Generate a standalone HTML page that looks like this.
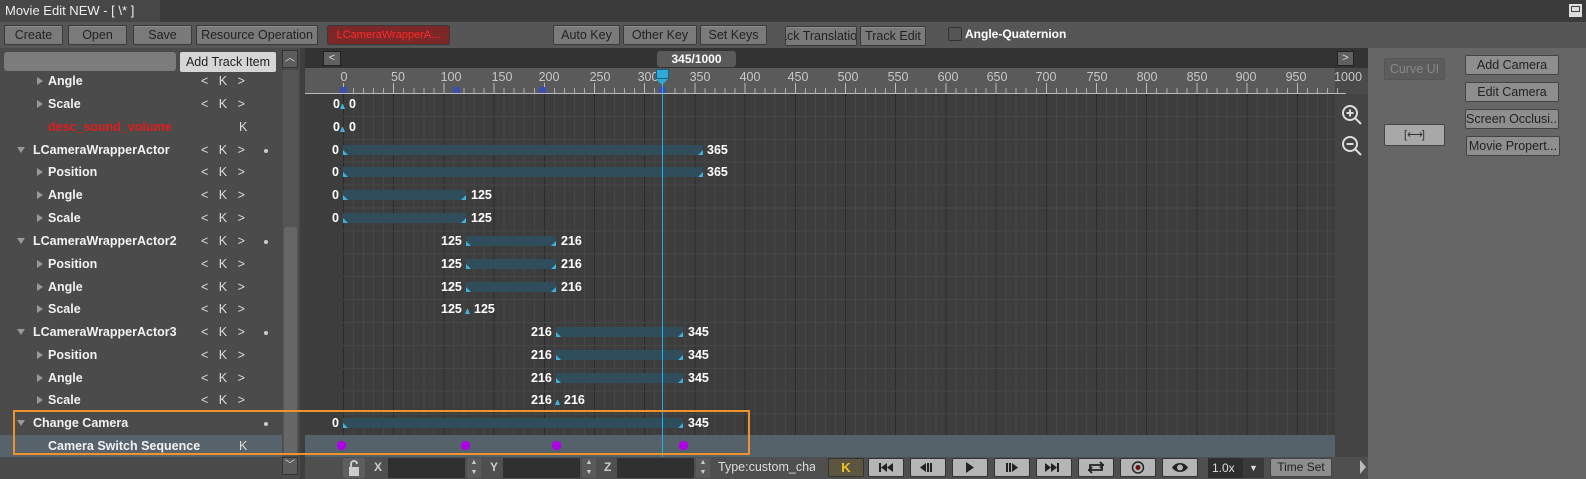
<!DOCTYPE html>
<html><head><meta charset="utf-8"><style>
*{margin:0;padding:0;box-sizing:border-box}
body{width:1586px;height:479px;overflow:hidden;background:#4a4a4a;font-family:"Liberation Sans",sans-serif;font-size:12px;color:#fff;position:relative}
.a{position:absolute}
.btn{position:absolute;background:#7a7a7a;border:1px solid #3a3a3a;border-radius:2px;color:#222;text-align:center;font-size:12.5px;line-height:18px;box-shadow:inset 0 1px 0 #8c8c8c}
.lb{position:absolute;font-size:12.5px;font-weight:bold;color:#f2f2f2;line-height:14px}
.k{position:absolute;color:#ddd;font-size:12.5px;line-height:14px}
.tri-d{position:absolute;width:0;height:0;border-left:4px solid transparent;border-right:4px solid transparent;border-top:6px solid #999}
.tri-r{position:absolute;width:0;height:0;border-top:4px solid transparent;border-bottom:4px solid transparent;border-left:6px solid #999}
.dot{position:absolute;width:4px;height:4px;border-radius:2px;background:#ccc}
.bar{position:absolute;height:10px;background:#2f4d5a}
.bar:before{content:"";position:absolute;left:0;bottom:0;border-bottom:5px solid #3fb2dc;border-right:5px solid transparent}
.bar:after{content:"";position:absolute;right:0;bottom:0;border-bottom:5px solid #3fb2dc;border-left:5px solid transparent}
.num{position:absolute;font-weight:bold;color:#fff;font-size:12.5px;line-height:14px}
.mk{position:absolute;width:5px;height:5px;border-bottom:5px solid #3fb2dc;border-left:2px solid transparent;border-right:2px solid transparent}
.pm{position:absolute;width:9px;height:9px;border-radius:4px;background:#b000e8}
.rl{position:absolute;top:70px;color:#c8c8c8;font-size:12.5px;transform:translateX(-50%)}
.pb{position:absolute;top:458px;height:19px;width:36px;background:#b5b5b5;border:1px solid #333;border-radius:2px}
.rb{position:absolute;background:#8e8e8e;border:1px solid #444;border-radius:2px;color:#222;text-align:center;font-size:12.5px;line-height:18px}
</style></head><body>
<div class="a" style="left:0;top:0;width:1586px;height:22px;background:#3b3b3b"></div>
<div class="a" style="left:0;top:0;width:160px;height:22px;background:#474747"></div>
<div class="a" style="left:5px;top:3px;font-size:13px;color:#eee">Movie Edit NEW - [ \* ]</div>
<div class="a" style="left:1569px;top:4px;width:13px;height:13px;background:#ddd"></div>
<div class="a" style="left:1571px;top:6px;width:9px;height:6px;border:1px solid #444"></div>
<div class="a" style="left:0;top:22px;width:1586px;height:26px;background:#565656"></div>
<div class="btn" style="left:4px;top:25px;width:59px">Create</div>
<div class="btn" style="left:68px;top:25px;width:59px">Open</div>
<div class="btn" style="left:133px;top:25px;width:59px">Save</div>
<div class="btn" style="left:196px;top:25px;width:122px">Resource Operation</div>
<div class="btn" style="left:327px;top:25px;width:123px;background:#7c2828;color:#ff2a2a;box-shadow:none;font-size:11px">LCameraWrapperA...</div>
<div class="btn" style="left:553px;top:25px;width:67px">Auto Key</div>
<div class="btn" style="left:623px;top:25px;width:74px">Other Key</div>
<div class="btn" style="left:700px;top:25px;width:67px">Set Keys</div>
<div class="btn" style="left:785px;top:26px;width:72px;overflow:hidden;white-space:nowrap;text-indent:-6px">ack Translatio</div>
<div class="btn" style="left:860px;top:26px;width:66px">Track Edit</div>
<div class="a" style="left:948px;top:27px;width:14px;height:14px;border:1px solid #333;background:#555;border-radius:2px"></div>
<div class="a" style="left:965px;top:27px;font-weight:bold;color:#fff">Angle-Quaternion</div>
<div class="a" style="left:0;top:48px;width:300px;height:431px;background:#4b4b4b"></div>
<div class="a" style="left:4px;top:52px;width:172px;height:19px;background:#7c7c7c;border-radius:3px"></div>
<div class="a" style="left:180px;top:52px;width:96px;height:20px;background:#d6d6d6;color:#222;text-align:center;line-height:20px;border-radius:2px;font-size:12.5px">Add Track Item</div>
<div class="a" style="left:282px;top:50px;width:16px;height:18px;background:#5c5c5c;border:1px solid #333;color:#ddd;text-align:center;font-size:10px;line-height:16px">︿</div>
<div class="a" style="left:283px;top:70px;width:15px;height:386px;background:#555"></div>
<div class="a" style="left:284px;top:227px;width:13px;height:228px;background:#666;border-radius:3px"></div>
<div class="a" style="left:282px;top:457px;width:16px;height:18px;background:#5c5c5c;border:1px solid #333;color:#ddd;text-align:center;font-size:10px;line-height:16px">﹀</div>
<div class="a" style="left:300px;top:48px;width:5px;height:431px;background:#3e3e3e"></div>
<div class="a" style="left:0;top:435px;width:282px;height:22px;background:#58636b"></div>
<div class="tri-r" style="left:37px;top:77px"></div><div class="lb" style="left:48px;top:74px">Angle</div>
<div class="tri-r" style="left:37px;top:100px"></div><div class="lb" style="left:48px;top:97px">Scale</div>
<div class="lb" style="left:48px;top:120px;color:#e01c1c">desc_sound_volume</div>
<div class="tri-d" style="left:17px;top:147px"></div><div class="lb" style="left:33px;top:143px">LCameraWrapperActor</div>
<div class="tri-r" style="left:37px;top:168px"></div><div class="lb" style="left:48px;top:165px">Position</div>
<div class="tri-r" style="left:37px;top:191px"></div><div class="lb" style="left:48px;top:188px">Angle</div>
<div class="tri-r" style="left:37px;top:214px"></div><div class="lb" style="left:48px;top:211px">Scale</div>
<div class="tri-d" style="left:17px;top:238px"></div><div class="lb" style="left:33px;top:234px">LCameraWrapperActor2</div>
<div class="tri-r" style="left:37px;top:260px"></div><div class="lb" style="left:48px;top:257px">Position</div>
<div class="tri-r" style="left:37px;top:283px"></div><div class="lb" style="left:48px;top:280px">Angle</div>
<div class="tri-r" style="left:37px;top:305px"></div><div class="lb" style="left:48px;top:302px">Scale</div>
<div class="tri-d" style="left:17px;top:329px"></div><div class="lb" style="left:33px;top:325px">LCameraWrapperActor3</div>
<div class="tri-r" style="left:37px;top:351px"></div><div class="lb" style="left:48px;top:348px">Position</div>
<div class="tri-r" style="left:37px;top:374px"></div><div class="lb" style="left:48px;top:371px">Angle</div>
<div class="tri-r" style="left:37px;top:396px"></div><div class="lb" style="left:48px;top:393px">Scale</div>
<div class="tri-d" style="left:17px;top:420px"></div><div class="lb" style="left:33px;top:416px">Change Camera</div>
<div class="lb" style="left:48px;top:439px">Camera Switch Sequence</div>
<div class="k" style="left:201px;top:74px;word-spacing:7px">&lt; K &gt;</div>
<div class="k" style="left:201px;top:97px;word-spacing:7px">&lt; K &gt;</div>
<div class="k" style="left:239px;top:120px">K</div>
<div class="k" style="left:201px;top:143px;word-spacing:7px">&lt; K &gt;</div><div class="dot" style="left:264px;top:149px"></div>
<div class="k" style="left:201px;top:165px;word-spacing:7px">&lt; K &gt;</div>
<div class="k" style="left:201px;top:188px;word-spacing:7px">&lt; K &gt;</div>
<div class="k" style="left:201px;top:211px;word-spacing:7px">&lt; K &gt;</div>
<div class="k" style="left:201px;top:234px;word-spacing:7px">&lt; K &gt;</div><div class="dot" style="left:264px;top:240px"></div>
<div class="k" style="left:201px;top:257px;word-spacing:7px">&lt; K &gt;</div>
<div class="k" style="left:201px;top:280px;word-spacing:7px">&lt; K &gt;</div>
<div class="k" style="left:201px;top:302px;word-spacing:7px">&lt; K &gt;</div>
<div class="k" style="left:201px;top:325px;word-spacing:7px">&lt; K &gt;</div><div class="dot" style="left:264px;top:331px"></div>
<div class="k" style="left:201px;top:348px;word-spacing:7px">&lt; K &gt;</div>
<div class="k" style="left:201px;top:371px;word-spacing:7px">&lt; K &gt;</div>
<div class="k" style="left:201px;top:393px;word-spacing:7px">&lt; K &gt;</div>
<div class="dot" style="left:264px;top:422px"></div>
<div class="k" style="left:239px;top:439px">K</div>
<div class="a" style="left:305px;top:48px;width:1063px;height:20px;background:#333"></div>
<div class="a" style="left:323px;top:51px;width:18px;height:15px;background:#606060;border:1px solid #222;color:#ddd;text-align:center;line-height:13px;font-size:11px">&lt;</div>
<div class="a" style="left:1337px;top:51px;width:17px;height:15px;background:#606060;border:1px solid #222;color:#ddd;text-align:center;line-height:13px;font-size:11px">&gt;</div>
<div class="a" style="left:657px;top:51px;width:79px;height:16px;background:#5a5a5a;border-radius:3px;color:#fff;text-align:center;line-height:16px;font-weight:bold">345/1000</div>
<div class="a" style="left:305px;top:68px;width:1030px;height:26px;background:#5a5a5a"></div>
<div class="a" style="left:343px;top:88px;width:1003px;height:5px;background:repeating-linear-gradient(90deg,#aaa 0 1px,transparent 1px 10.04px)"></div>
<div class="a" style="left:343px;top:83px;width:1003px;height:10px;background:repeating-linear-gradient(90deg,#bbb 0 1px,transparent 1px 50.2px)"></div>
<div class="a" style="left:305px;top:93px;width:1041px;height:1px;background:#bbb"></div>
<div class="rl" style="left:344px">0</div><div class="rl" style="left:398px">50</div><div class="rl" style="left:451px">100</div><div class="rl" style="left:502px">150</div><div class="rl" style="left:549px">200</div><div class="rl" style="left:600px">250</div><div class="rl" style="left:648px">300</div><div class="rl" style="left:700px">350</div><div class="rl" style="left:750px">400</div><div class="rl" style="left:798px">450</div><div class="rl" style="left:848px">500</div><div class="rl" style="left:898px">550</div><div class="rl" style="left:948px">600</div><div class="rl" style="left:997px">650</div><div class="rl" style="left:1046px">700</div><div class="rl" style="left:1097px">750</div><div class="rl" style="left:1147px">800</div><div class="rl" style="left:1197px">850</div><div class="rl" style="left:1246px">900</div><div class="rl" style="left:1296px">950</div><div class="rl" style="left:1348px">1000</div>
<div class="a" style="left:340px;top:87px;width:7px;height:6px;background:#3b4fb0"></div>
<div class="a" style="left:453px;top:87px;width:7px;height:6px;background:#3b4fb0"></div>
<div class="a" style="left:539px;top:87px;width:7px;height:6px;background:#3b4fb0"></div>
<div class="a" style="left:659px;top:87px;width:7px;height:6px;background:#3b4fb0"></div>
<div class="a" style="left:305px;top:94px;width:1030px;height:363px;background:#3d3d3d"></div>
<div class="a" style="left:343px;top:94px;width:1003px;height:363px;background:repeating-linear-gradient(90deg,#474747 0 1px,transparent 1px 10.04px)"></div>
<div class="a" style="left:343px;top:94px;width:1003px;height:363px;background:repeating-linear-gradient(90deg,#2a2a2a 0 1px,transparent 1px 50.2px)"></div>
<div class="a" style="left:305px;top:94px;width:1030px;height:363px;background:repeating-linear-gradient(180deg,transparent 0 21.9px,#474747 21.9px 22.9px)"></div>
<div class="a" style="left:305px;top:94px;width:38px;height:363px;background:#3d3d3d"></div>
<div class="a" style="left:305px;top:435px;width:1030px;height:22px;background:#56626a"></div>
<div class="a" style="left:1335px;top:94px;width:33px;height:363px;background:#444"></div>
<div class="num" style="left:333px;top:97px">0</div><div class="mk" style="left:340px;top:104px"></div><div class="num" style="left:349px;top:97px">0</div>
<div class="num" style="left:333px;top:120px">0</div><div class="mk" style="left:340px;top:127px"></div><div class="num" style="left:349px;top:120px">0</div>
<div class="num" style="left:332px;top:143px">0</div><div class="bar" style="left:343px;top:145px;width:360px"></div><div class="num" style="left:707px;top:143px">365</div>
<div class="num" style="left:332px;top:165px">0</div><div class="bar" style="left:343px;top:167px;width:360px"></div><div class="num" style="left:707px;top:165px">365</div>
<div class="num" style="left:332px;top:188px">0</div><div class="bar" style="left:343px;top:190px;width:123px"></div><div class="num" style="left:471px;top:188px">125</div>
<div class="num" style="left:332px;top:211px">0</div><div class="bar" style="left:343px;top:213px;width:123px"></div><div class="num" style="left:471px;top:211px">125</div>
<div class="num" style="left:441px;top:234px">125</div><div class="bar" style="left:466px;top:236px;width:90px"></div><div class="num" style="left:561px;top:234px">216</div>
<div class="num" style="left:441px;top:257px">125</div><div class="bar" style="left:466px;top:259px;width:90px"></div><div class="num" style="left:561px;top:257px">216</div>
<div class="num" style="left:441px;top:280px">125</div><div class="bar" style="left:466px;top:282px;width:90px"></div><div class="num" style="left:561px;top:280px">216</div>
<div class="num" style="left:441px;top:302px">125</div><div class="mk" style="left:465px;top:309px"></div><div class="num" style="left:474px;top:302px">125</div>
<div class="num" style="left:531px;top:325px">216</div><div class="bar" style="left:556px;top:327px;width:127px"></div><div class="num" style="left:688px;top:325px">345</div>
<div class="num" style="left:531px;top:348px">216</div><div class="bar" style="left:556px;top:350px;width:127px"></div><div class="num" style="left:688px;top:348px">345</div>
<div class="num" style="left:531px;top:371px">216</div><div class="bar" style="left:556px;top:373px;width:127px"></div><div class="num" style="left:688px;top:371px">345</div>
<div class="num" style="left:531px;top:393px">216</div><div class="mk" style="left:555px;top:400px"></div><div class="num" style="left:564px;top:393px">216</div>
<div class="num" style="left:332px;top:416px">0</div><div class="bar" style="left:343px;top:418px;width:340px"></div><div class="num" style="left:688px;top:416px">345</div>
<div class="pm" style="left:337px;top:441px"></div><div class="pm" style="left:461px;top:441px"></div><div class="pm" style="left:552px;top:441px"></div><div class="pm" style="left:679px;top:441px"></div>
<div class="a" style="left:662px;top:80px;width:1px;height:377px;background:#19b4ea"></div>
<div class="a" style="left:656px;top:69px;width:13px;height:10px;background:#2fa9d8;border:1px solid #15607c"></div>
<div class="a" style="left:656px;top:79px;border-left:6.5px solid transparent;border-right:6.5px solid transparent;border-top:6px solid #2fa9d8"></div>
<svg class="a" style="left:1340px;top:103px" width="24" height="56" viewBox="0 0 24 56"><g fill="none" stroke="#ddd" stroke-width="2"><circle cx="10" cy="10" r="7"/><path d="M15 15l6 6M6.5 10h7M10 6.5v7"/><circle cx="10" cy="41" r="7"/><path d="M15 46l6 6M6.5 41h7"/></g></svg>
<div class="a" style="left:13px;top:410px;width:737px;height:45px;border:2px solid #f0922e"></div>
<div class="a" style="left:1368px;top:48px;width:218px;height:431px;background:#666"></div>
<div class="rb" style="left:1384px;top:58px;width:61px;height:22px;background:#5c5c5c;color:#888;border-color:#555;line-height:20px">Curve UI</div>
<div class="rb" style="left:1384px;top:124px;width:61px;height:22px;background:#a8a8a8;line-height:20px;font-size:11px;color:#333">[<span style="letter-spacing:-1px">⟷</span>]</div>
<div class="rb" style="left:1465px;top:55px;width:94px;height:20px">Add Camera</div>
<div class="rb" style="left:1465px;top:82px;width:94px;height:20px">Edit Camera</div>
<div class="rb" style="left:1465px;top:109px;width:94px;height:20px;white-space:nowrap;overflow:hidden">Screen Occlusi...</div>
<div class="rb" style="left:1466px;top:136px;width:94px;height:20px;white-space:nowrap;overflow:hidden">Movie Propert...</div>
<div class="a" style="left:305px;top:457px;width:1063px;height:22px;background:#4f4f4f"></div>
<div class="a" style="left:343px;top:458px;width:22px;height:20px;background:#5e5e5e;border-radius:2px"></div>
<svg class="a" style="left:347px;top:459px" width="14" height="18"><path d="M4 8V5a3 3 0 0 1 6 0" fill="none" stroke="#ccc" stroke-width="2"/><rect x="2" y="8" width="10" height="9" fill="#ccc"/></svg>
<div class="a" style="left:374px;top:460px;color:#ccc;font-weight:bold">X</div>
<div class="a" style="left:388px;top:458px;width:77px;height:20px;background:#303030"></div>
<div class="a" style="left:467px;top:458px;width:14px;height:20px;background:#5a5a5a;color:#ccc;font-size:7px;text-align:center;line-height:10px">▲<br>▼</div>
<div class="a" style="left:490px;top:460px;color:#ccc;font-weight:bold">Y</div>
<div class="a" style="left:503px;top:458px;width:77px;height:20px;background:#303030"></div>
<div class="a" style="left:582px;top:458px;width:14px;height:20px;background:#5a5a5a;color:#ccc;font-size:7px;text-align:center;line-height:10px">▲<br>▼</div>
<div class="a" style="left:604px;top:460px;color:#ccc;font-weight:bold">Z</div>
<div class="a" style="left:617px;top:458px;width:77px;height:20px;background:#303030"></div>
<div class="a" style="left:696px;top:458px;width:14px;height:20px;background:#5a5a5a;color:#ccc;font-size:7px;text-align:center;line-height:10px">▲<br>▼</div>
<div class="a" style="left:718px;top:460px;color:#ddd;width:97px;overflow:hidden;white-space:nowrap;font-size:12.5px">Type:custom_cha</div>
<div class="a" style="left:828px;top:458px;width:36px;height:19px;background:#5c5540;border:1px solid #333;border-radius:2px;color:#f0c420;font-weight:bold;text-align:center;line-height:17px;font-size:13px">K</div>
<div class="pb" style="left:868px"></div><div class="pb" style="left:910px"></div><div class="pb" style="left:952px"></div><div class="pb" style="left:994px"></div><div class="pb" style="left:1036px"></div><div class="pb" style="left:1078px"></div><div class="pb" style="left:1120px"></div><div class="pb" style="left:1162px"></div>
<svg class="a" style="left:868px;top:458px" width="330" height="19"><g fill="#222">
<rect x="11" y="5" width="2" height="9"/><path d="M19 5v9l-6-4.5z M25 5v9l-6-4.5z"/>
<path d="M58 5v9l-6-4.5z"/><rect x="59" y="5" width="2" height="9"/><rect x="62" y="5" width="2" height="9"/>
<path d="M98 4v11l8-5.5z"/>
<rect x="138" y="5" width="2" height="9"/><rect x="141" y="5" width="2" height="9"/><path d="M144 5v9l6-4.5z"/>
<path d="M177 5v9l6-4.5z M183 5v9l6-4.5z"/><rect x="189" y="5" width="2" height="9"/>
<circle cx="270" cy="9.5" r="5.5" fill="none" stroke="#222" stroke-width="1.5"/><circle cx="270" cy="9.5" r="2.5" fill="#6b1010"/>
<path d="M304 9.5c4-6 12-6 16 0c-4 6-12 6-16 0z"/><circle cx="312" cy="9.5" r="3" fill="#b5b5b5"/>
</g><g fill="none" stroke="#222" stroke-width="1.8"><path d="M236 7h-14v5 M220 12h14v-5 M232 4l3 3-3 3 M224 9l-3 3 3 3"/></g></svg>
<div class="a" style="left:1208px;top:458px;width:56px;height:20px;background:#2e2e2e;color:#ddd;line-height:20px;padding-left:4px">1.0x</div>
<div class="a" style="left:1243px;top:458px;width:21px;height:20px;background:#3a3a3a;color:#ddd;text-align:center;line-height:20px;font-size:9px">▼</div>
<div class="a" style="left:1270px;top:458px;width:62px;height:19px;background:#8e8e8e;border:1px solid #444;border-radius:2px;color:#222;text-align:center;line-height:17px">Time Set</div>
<div class="a" style="left:1360px;top:460px;border-top:7px solid transparent;border-bottom:7px solid transparent;border-left:6px solid #bbb"></div>
</body></html>
